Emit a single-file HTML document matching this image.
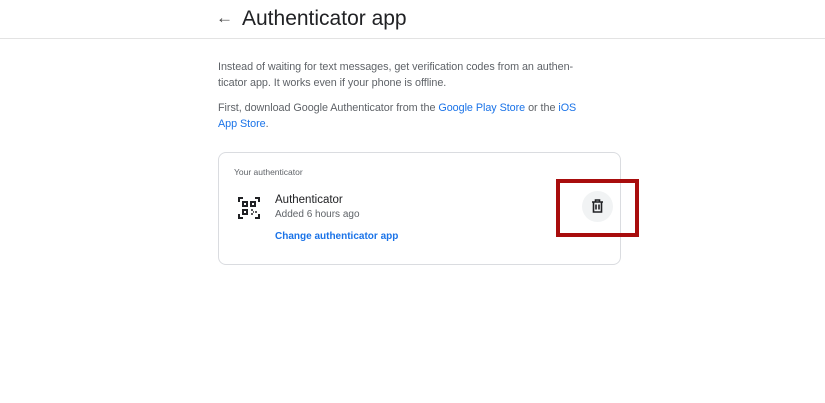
<!DOCTYPE html>
<html><head><style>
body{margin:0;width:825px;height:403px;background:#fff;font-family:"Liberation Sans",Arial,sans-serif;position:relative;overflow:hidden}
.a{position:absolute;white-space:nowrap}
</style></head><body>
<div class="a" style="left:216px;top:8px;font-size:17px;color:#444">&#8592;</div>
<div class="a" style="left:242px;top:7px;font-size:21px;color:#202124">Authenticator app</div>
<div class="a" style="left:0;top:38px;width:825px;height:1px;background:#e3e3e3"></div>
<div class="a" style="left:218px;top:59px;font-size:10.8px;letter-spacing:-0.05px;line-height:16px;color:#5f6368">Instead of waiting for text messages, get verification codes from an authen-<br>ticator app. It works even if your phone is offline.</div>
<div class="a" style="left:218px;top:100px;font-size:10.8px;letter-spacing:-0.05px;line-height:16px;color:#5f6368">First, download Google Authenticator from the <span style="color:#1a73e8">Google Play Store</span> or the <span style="color:#1a73e8">iOS<br>App Store</span>.</div>
<div class="a" style="left:218px;top:152px;width:401px;height:111px;border:1px solid #dadce0;border-radius:8px"></div>
<div class="a" style="left:234px;top:167px;font-size:8.5px;color:#5f6368">Your authenticator</div>
<svg class="a" style="left:238px;top:197px" width="22" height="22" viewBox="0 0 22 22" fill="none" stroke="#202124" stroke-width="2"><path d="M1 5V1h4M17 1h4v4M1 17v4h4M21 17v4h-4"/><rect x="5" y="5" width="4" height="4"/><rect x="13" y="5" width="4" height="4"/><rect x="5" y="13" width="4" height="4"/><path d="M13 13h2M17 15h2M13 17h2M15 15h1" stroke-width="1.6"/></svg>
<div class="a" style="left:275px;top:194px;font-size:11.5px;color:#202124">Authenticator</div>
<div class="a" style="left:275px;top:209px;font-size:10px;color:#5f6368">Added 6 hours ago</div>
<div class="a" style="left:275px;top:231px;font-size:10px;font-weight:bold;color:#1a73e8">Change authenticator app</div>
<div class="a" style="left:582px;top:191px;width:31px;height:31px;border-radius:50%;background:#f1f3f4"></div>
<svg class="a" style="left:591px;top:199px" width="13" height="14" viewBox="0 0 13 14" fill="none" stroke="#202124" stroke-width="1.6"><path d="M1 3h11M4.5 3V1h4v2M2.5 3v10h8V3M5 5.5v5M8 5.5v5"/></svg>
<div class="a" style="left:556px;top:179px;width:75px;height:50px;border:4px solid #a80d0d"></div>
</body></html>
